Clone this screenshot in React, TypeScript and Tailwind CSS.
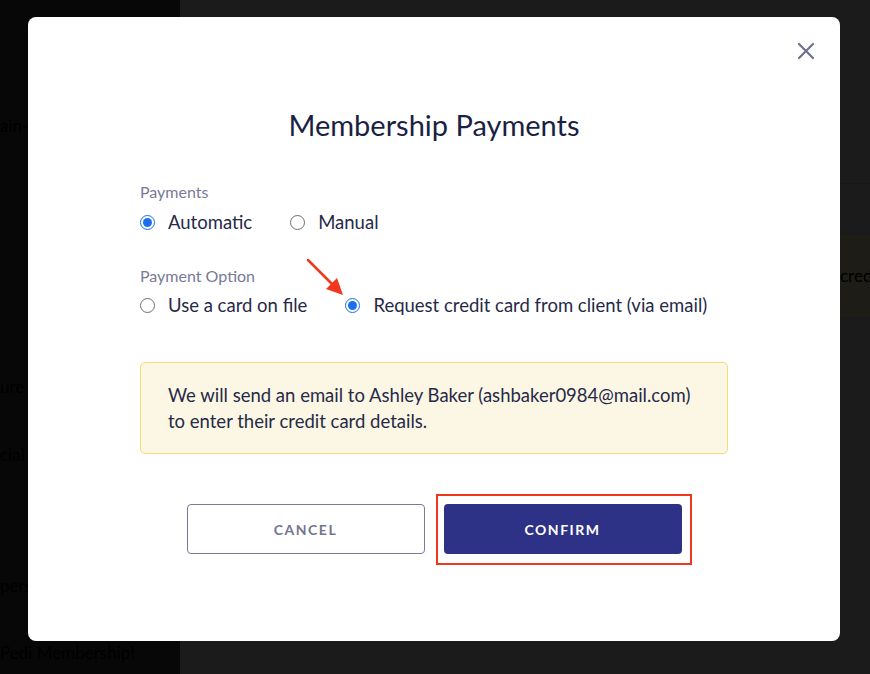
import React from "react";

const font = { fontFamily: "Lato, 'Noto Sans', sans-serif" };

function Radio({ checked }: { checked?: boolean }) {
  return checked ? (
    <span className="flex h-[15px] w-[15px] shrink-0 items-center justify-center rounded-full border-[1.5px] border-[#1a6ff0] bg-white">
      <span className="h-[9px] w-[9px] rounded-full bg-[#1a6ff0]" />
    </span>
  ) : (
    <span className="h-[15px] w-[15px] shrink-0 rounded-full border border-[#6f6f6f] bg-white" />
  );
}

function Option({ checked, label }: { checked?: boolean; label: string }) {
  return (
    <label className="flex items-center gap-[13px]">
      <Radio checked={checked} />
      <span className="whitespace-nowrap text-[18.5px] leading-[22px] text-[#262a48]">{label}</span>
    </label>
  );
}

export default function App() {
  return (
    <div className="relative h-[674px] w-[870px] overflow-hidden" style={font}>
      {/* background page */}
      <div className="flex h-full w-full">
        <div className="flex w-[180px] flex-col bg-[#070707] text-[17px] text-black">
          <div className="mt-[113px]">ain-</div>
          <div className="mt-[235px]">ure</div>
          <div className="mt-[43px]">cial</div>
          <div className="mt-[105px]">pers</div>
          <div className="mt-[42px] whitespace-nowrap">Pedi Membership!</div>
        </div>
        <div className="flex flex-1 flex-col bg-[#1b1b1b]">
          <div className="mt-[183px] h-px bg-[#161616]" />
          <div className="mt-[52px] flex h-[80px] items-center justify-end overflow-hidden border-y border-[#24200f] bg-[#1d1c17] text-[17px] text-black">
            <span className="w-[30px] overflow-hidden whitespace-nowrap">cred</span>
          </div>
        </div>
      </div>

      {/* modal */}
      <div className="absolute left-[28px] top-[17px] h-[624px] w-[812px] rounded-[8px] bg-white">
        <button className="absolute right-[24px] top-[24px] flex h-[20px] w-[20px] items-center justify-center text-[#6d7090]">
          <svg width="18" height="18" viewBox="0 0 18 18" fill="none" stroke="currentColor" strokeWidth="2.2" strokeLinecap="round">
            <path d="M2 2 L16 16 M16 2 L2 16" />
          </svg>
        </button>

        <div className="flex flex-col px-[112px]">
          <h1 className="mt-[92px] text-center text-[29px] leading-[32px] text-[#1b1f44]">
            Membership Payments
          </h1>

          <div className="mt-[41px] text-[16px] leading-[20px] text-[#777a98]">Payments</div>
          <div className="mt-[9px] flex items-center gap-[38px]">
            <Option checked label="Automatic" />
            <Option label="Manual" />
          </div>

          <div className="mt-[33px] text-[16px] leading-[20px] text-[#777a98]">Payment Option</div>
          <div className="mt-[8px] flex items-center gap-[38px]">
            <Option label="Use a card on file" />
            <Option checked label="Request credit card from client (via email)" />
          </div>

          <div className="mt-[46px] w-[588px] rounded-[5px] border border-[#f4dd74] bg-[#fcf7e4] px-[27px] py-[19px] text-[18.5px] leading-[26px] text-[#262a48]">
            We will send an email to Ashley Baker (ashbaker0984@mail.com)
            <br />
            to enter their credit card details.
          </div>

          <div className="mt-[50px] flex justify-center gap-[19px]">
            <button className="h-[50px] w-[238px] rounded-[4px] border border-[#777a99] bg-white text-[14px] font-bold tracking-[1.5px] text-[#73768f]">
              CANCEL
            </button>
            <div className="relative">
              <button className="h-[50px] w-[238px] rounded-[4px] bg-[#2e3287] text-[14px] font-bold tracking-[1.5px] text-white">
                CONFIRM
              </button>
              <div className="pointer-events-none absolute -left-[8px] -top-[10px] h-[71px] w-[256px] border-[2.5px] border-[#f2361c]" />
            </div>
          </div>
        </div>
      </div>

      {/* annotation arrow */}
      <svg className="pointer-events-none absolute left-0 top-0" width="870" height="674">
        <line x1="308" y1="260" x2="333" y2="285" stroke="#f0381e" strokeWidth="2.5" strokeLinecap="round" />
        <polygon points="343,295 326,289 337,278" fill="#f0381e" />
      </svg>
    </div>
  );
}
